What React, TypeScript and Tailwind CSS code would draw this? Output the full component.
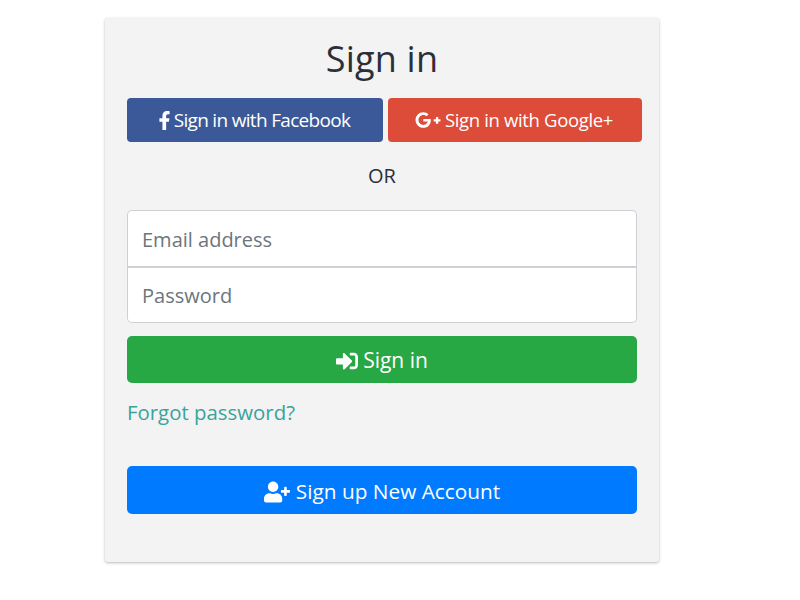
import { FaFacebookF, FaGooglePlusG, FaSignInAlt, FaUserPlus } from "react-icons/fa";

const font = "font-['Open_Sans','Noto_Sans',sans-serif]";

export default function App() {
    return (
        <div className={`min-h-[600px] bg-white pl-[105px] pt-[18px] ${font}`}>
            {/* Card */}
            <div className="h-[544px] w-[554px] rounded-[3px] bg-[#f3f3f4] pl-[22px] pr-[22px] shadow-[0_1px_3px_rgba(0,0,0,.28)]">
                <h1 className="h-[80px] pt-[18px] text-center text-[36px] leading-[46px] tracking-[0.2px] text-[#2b2f38]">
                    Sign in
                </h1>

                {/* Social */}
                <div className="flex w-[515px] gap-[5px]">
                    <button className="flex h-[44px] w-[256px] items-center justify-center rounded-[4px] bg-[#3b5998] pr-[5px] text-[19px] tracking-[-0.68px] text-white">
                        <FaFacebookF className="text-[19px]" />
                        Sign in with Facebook
                    </button>
                    <button className="flex h-[44px] w-[254px] items-center justify-center gap-[4px] rounded-[4px] bg-[#dd4b39] pr-[2px] text-[18.5px] tracking-[-0.35px] text-white">
                        <FaGooglePlusG className="text-[26px]" />
                        Sign in with Google+
                    </button>
                </div>

                <p className="mt-[21px] text-center text-[20px] leading-[26px] text-[#2b2f38]">
                    OR
                </p>

                {/* Fields */}
                <div className="mt-[21px] flex flex-col">
                    <input
                        type="email"
                        placeholder="Email address"
                        className="h-[58px] w-full rounded-t-[5px] border border-b-2 border-[#ced0d6] bg-white px-[14px] pt-[2px] text-[20px] text-[#495057] outline-none placeholder:text-[#6c757d]"
                    />
                    <input
                        type="password"
                        placeholder="Password"
                        className="h-[55px] w-full rounded-b-[5px] border border-t-0 border-[#ced0d6] bg-white px-[14px] text-[20px] text-[#495057] outline-none placeholder:text-[#6c757d]"
                    />
                </div>

                <button className="mt-[13px] flex h-[47px] w-full items-center justify-center gap-[5px] rounded-[5px] bg-[#28a745] pt-[2px] text-[21px] font-medium text-white">
                    <FaSignInAlt className="text-[22px]" />
                    Sign in
                </button>

                <a href="#" className="mt-[16px] block text-[20.4px] leading-[27px] text-[#3aa39a]">
                    Forgot password?
                </a>

                <button className="mt-[40px] flex h-[48px] w-full items-center justify-center gap-[6px] rounded-[5px] bg-[#007bff] pt-[4px] text-[20.8px] font-medium text-white">
                    <FaUserPlus className="text-[26px]" />
                    Sign up New Account
                </button>
            </div>
        </div>
    );
}
